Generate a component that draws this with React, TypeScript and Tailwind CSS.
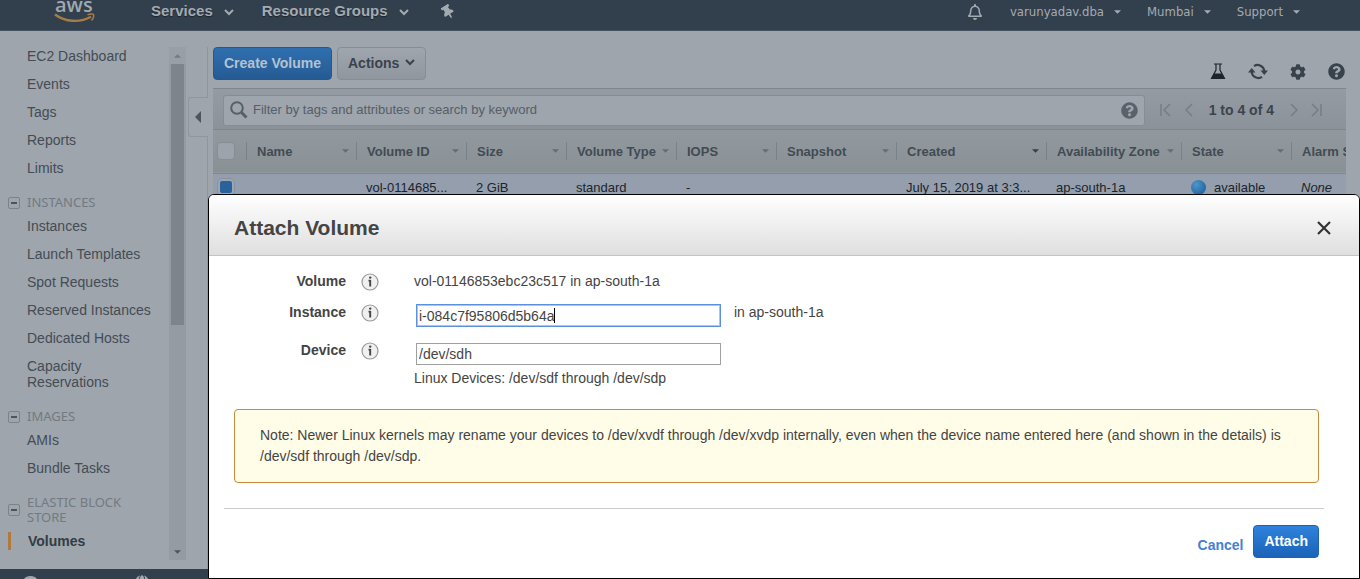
import React from 'react'
import { FaQuestionCircle, FaThumbtack, FaCog, FaRegBell, FaComment, FaGlobe } from 'react-icons/fa'

type NavSection = { title?: string; items: string[] }

const sections: NavSection[] = [
  { items: ['EC2 Dashboard', 'Events', 'Tags', 'Reports', 'Limits'] },
  {
    title: 'INSTANCES',
    items: [
      'Instances',
      'Launch Templates',
      'Spot Requests',
      'Reserved Instances',
      'Dedicated Hosts',
      'Capacity Reservations',
    ],
  },
  { title: 'IMAGES', items: ['AMIs', 'Bundle Tasks'] },
  { title: 'ELASTIC BLOCK STORE', items: ['Volumes'] },
]

const columns = [
  { label: 'Name', width: 'w-[110px]', value: '' },
  { label: 'Volume ID', width: 'w-[110px]', value: 'vol-0114685...' },
  { label: 'Size', width: 'w-[100px]', value: '2 GiB' },
  { label: 'Volume Type', width: 'w-[110px]', value: 'standard' },
  { label: 'IOPS', width: 'w-[100px]', value: '-' },
  { label: 'Snapshot', width: 'w-[120px]', value: '' },
  { label: 'Created', width: 'w-[150px]', value: 'July 15, 2019 at 3:3...', sorted: true },
  { label: 'Availability Zone', width: 'w-[135px]', value: 'ap-south-1a' },
  { label: 'State', width: 'w-[110px]', value: 'available' },
]

const Chevron = ({ className }: { className?: string }) => (
  <svg viewBox="0 0 10 7" className={className} fill="none" stroke="currentColor" strokeWidth="2" aria-hidden="true">
    <path d="M1 1l4 4 4-4" />
  </svg>
)

const Caret = ({ className }: { className?: string }) => (
  <svg viewBox="0 0 8 4" className={className} fill="currentColor" aria-hidden="true">
    <path d="M0 0h8L4 4z" />
  </svg>
)

const AwsLogo = () => (
  <svg viewBox="0 0 44 31" className="h-[31px] w-11" role="img" aria-label="aws">
    <text x="2" y="12" fontFamily="Open Sans, sans-serif" fontWeight="600" fontSize="20" fill="#a0a8b0">
      aws
    </text>
    <path d="M2 14.500c10 7.600 25 8.400 36 2.300" fill="none" stroke="#a97c46" strokeWidth="2.400" />
    <path d="M34.500 14.800c2.500-1 5-1 6-.4.500 1.500-.3 4-2 6" fill="none" stroke="#a97c46" strokeWidth="1.500" />
  </svg>
)

const TopNav = () => (
  <header className="flex h-[31px] shrink-0 border-b border-[#46525f] bg-[#323f4c] text-[#a3abb2]">
    <a href="#" className="ml-[53px]">
      <AwsLogo />
    </a>
    <nav className="ml-[54px] flex h-[23px] items-center text-[15px] font-bold [text-shadow:0_1px_1px_#1c242c]">
      <a href="#" className="flex items-center gap-[11px]">
        Services
        <Chevron className="mt-0.5 h-[7px] w-[10px]" />
      </a>
      <a href="#" className="ml-[28px] flex items-center gap-[11px]">
        Resource Groups
        <Chevron className="mt-0.5 h-[7px] w-[10px]" />
      </a>
      <button type="button" aria-label="Pin" className="ml-8">
        <FaThumbtack className="size-[14px] -rotate-[32deg]" />
      </button>
    </nav>
    <nav className="mr-[60px] ml-auto flex h-[23px] items-center font-['DejaVu_Sans_Condensed','Noto_Sans',sans-serif] text-[13px]">
      <button type="button" aria-label="Notifications" className="mr-[27px]">
        <FaRegBell className="size-4" />
      </button>
      <a href="#" className="mr-[26px] flex items-center gap-[10px]">
        varunyadav.dba <Caret className="mt-px h-1 w-[7px]" />
      </a>
      <a href="#" className="mr-[26px] flex items-center gap-[10px]">
        Mumbai <Caret className="mt-px h-1 w-[7px]" />
      </a>
      <a href="#" className="flex items-center gap-[10px]">
        Support <Caret className="mt-px h-1 w-[7px]" />
      </a>
    </nav>
  </header>
)

const Sidebar = () => (
  <aside className="flex w-[208px] shrink-0">
    <nav className="w-[169px] pt-[11px] text-sm text-[#444c55]">
      {sections.map((section, i) => (
        <div key={i}>
          {section.title && (
            <div className="flex items-center pt-[13px] pb-[2px] pl-2">
              <button
                type="button"
                aria-label={`Collapse ${section.title}`}
                className="flex size-3 shrink-0 items-center justify-center rounded-[2px] border border-[#7b838b]"
              >
                <span className="h-0.5 w-1.5 bg-[#4c545d]" />
              </button>
              <h2 className="ml-[7px] w-[120px] font-['Noto_Sans',sans-serif] text-[13px] leading-[15px] text-[#727a83]">
                {section.title}
              </h2>
            </div>
          )}
          {section.items.map((item) =>
            item === 'Volumes' ? (
              <a key={item} href="#" className="flex h-7 items-center pl-2 font-bold text-[#333c45]">
                <span className="mr-[17px] h-[18px] w-[3px] bg-[#b07a3e]" />
                {item}
              </a>
            ) : (
              <a key={item} href="#" className="block py-[6px] pl-[27px] leading-4">
                <span className={item.length > 18 ? 'block w-[90px]' : 'whitespace-nowrap'}>{item}</span>
              </a>
            ),
          )}
        </div>
      ))}
    </nav>
    <div className="mt-4 mb-[9px] flex w-[17px] flex-col items-center bg-[#949ba2] text-[#4c545d]">
      <div className="flex h-[17px] w-full shrink-0 items-center justify-center bg-[#989fa6] text-[#727a83]">
        <Caret className="h-1 w-[7px] rotate-180" />
      </div>
      <div className="h-[261px] w-[13px] bg-[#7d848b]" />
      <div className="mt-auto flex h-[17px] w-full items-center justify-center">
        <Caret className="h-1 w-[7px]" />
      </div>
    </div>
    <div className="mt-4 flex flex-1 flex-col items-end">
      <div className="h-[50px] w-px bg-[#8f979e]" />
      <button
        type="button"
        aria-label="Hide navigation"
        className="flex h-10 w-5 shrink-0 items-center justify-center rounded-l-[3px] border border-r-0 border-[#8f979e] pr-0.5"
      >
        <svg viewBox="0 0 6 12" className="h-3 w-1.5" fill="#4c545d">
          <path d="M6 0v12L0 6z" />
        </svg>
      </button>
      <div className="w-px flex-1 bg-[#8f979e]" />
    </div>
  </aside>
)

const Pager = () => (
  <div className="ml-[15px] flex items-center text-[#757d85]">
    <button type="button" aria-label="First page">
      <svg viewBox="0 0 11 14" className="h-[14px] w-[11px]" fill="none" stroke="currentColor" strokeWidth="1.500">
        <path d="M1 1v12M10 1L4 7l6 6" />
      </svg>
    </button>
    <button type="button" aria-label="Previous page" className="ml-[14px]">
      <svg viewBox="0 0 8 14" className="h-[14px] w-2" fill="none" stroke="currentColor" strokeWidth="1.500">
        <path d="M7 1L1 7l6 6" />
      </svg>
    </button>
    <span className="mx-4 text-sm font-bold whitespace-nowrap text-[#3b444d]">1 to 4 of 4</span>
    <button type="button" aria-label="Next page">
      <svg viewBox="0 0 8 14" className="h-[14px] w-2" fill="none" stroke="currentColor" strokeWidth="1.500">
        <path d="M1 1l6 6-6 6" />
      </svg>
    </button>
    <button type="button" aria-label="Last page" className="mr-6 ml-[13px]">
      <svg viewBox="0 0 11 14" className="h-[14px] w-[11px]" fill="none" stroke="currentColor" strokeWidth="1.500">
        <path d="M10 1v12M1 1l6 6-6 6" />
      </svg>
    </button>
  </div>
)

const VolumeTable = () => (
  <table className="w-full table-fixed border-collapse text-left">
    <thead>
      <tr className="h-[43px] border-b border-[#7f868d] bg-linear-to-b from-[#91999f] to-[#8a9195] text-[13px] text-[#424b53]">
        <th className="w-[33px] p-0 pl-1">
          <input
            type="checkbox"
            aria-label="Select all volumes"
            className="block size-[18px] appearance-none rounded-[4px] border border-[#868e95] bg-[#9ca3aa]"
          />
        </th>
        {columns.map((col) => (
          <th key={col.label} className={`${col.width} p-0`}>
            <div className="flex h-[18px] items-center justify-between border-l border-[#79818a] pr-[7px] pl-[10px] whitespace-nowrap">
              {col.label}
              <Caret className={col.sorted ? 'h-1 w-[7px] text-[#363f48]' : 'h-1 w-[7px] text-[#646c75]'} />
            </div>
          </th>
        ))}
        <th className="overflow-hidden p-0">
          <div className="flex h-[18px] items-center overflow-hidden border-l border-[#79818a] pl-[10px] whitespace-nowrap">
            Alarm Status
          </div>
        </th>
      </tr>
    </thead>
    <tbody>
      <tr className="h-[28px] bg-[#949eac] text-[13px] text-[#1c242d]">
        <td className="p-0 pl-1">
          <input
            type="checkbox"
            defaultChecked
            aria-label="Select vol-01146853ebc23c517"
            className="block size-[18px] appearance-none rounded-[5px] border-[3px] border-[#9ca6b2] bg-[#9ca3aa] outline outline-[#8791a0] -outline-offset-1 checked:bg-[#2a629c]"
          />
        </td>
        {columns.map((col) => (
          <td key={col.label} className="p-0 pl-[10px] whitespace-nowrap">
            {col.label === 'State' ? (
              <span className="flex items-center gap-2">
                <span className="size-[15px] rounded-full bg-radial-[at_35%_30%] from-[#4f94c9] to-[#125a98]" />
                {col.value}
              </span>
            ) : (
              col.value
            )}
          </td>
        ))}
        <td className="p-0 pl-[10px] italic">None</td>
      </tr>
    </tbody>
  </table>
)

const VolumesPanel = () => (
  <main className="mr-[14px] ml-[5px] min-w-0 flex-1 pt-4">
    <div className="mb-2 flex items-end">
      <button
        type="button"
        className="h-[33px] rounded-[4px] border border-[#235892] bg-linear-to-b from-[#2f6faf] to-[#255b94] px-[10px] pb-[2px] text-sm font-bold text-[#b3c2d2]"
      >
        Create Volume
      </button>
      <button
        type="button"
        className="ml-[5px] flex h-[33px] items-center gap-[6px] rounded-[4px] border border-[#868e95] bg-linear-to-b from-[#9fa6ad] to-[#8f969d] px-[10px] pb-[2px] text-sm font-bold text-[#3a434c]"
      >
        Actions
        <Chevron className="h-[7px] w-[10px]" />
      </button>
      <div className="mr-px ml-auto flex items-center gap-[22px] text-[#39424b]">
        <button type="button" aria-label="Experimental features">
          <svg viewBox="0 0 16 17" className="h-[17px] w-4" fill="none" stroke="#1c252e">
            <path d="M4 1h8M6 1v6L1.500 15.500h13L10 7V1" strokeWidth="1.200" />
            <path d="M4 10.500h8l3 5.500H1z" fill="#1c252e" stroke="none" />
          </svg>
        </button>
        <button type="button" aria-label="Refresh">
          <svg viewBox="0 0 20 17" className="h-[17px] w-5" fill="none" stroke="currentColor" strokeWidth="2.200">
            <path d="M6 3.200A6.600 6.600 0 0 1 16.300 8" />
            <path d="M14 13.800A6.600 6.600 0 0 1 3.700 9" />
            <path d="M12.500 7.500H20L16.300 12zM0 9.500h7.500L3.700 5z" fill="currentColor" stroke="none" />
          </svg>
        </button>
        <button type="button" aria-label="Preferences">
          <FaCog className="size-4" />
        </button>
        <button type="button" aria-label="Help">
          <FaQuestionCircle className="size-[17px]" />
        </button>
      </div>
    </div>
    <div className="flex h-[42px] items-center border-y border-[#7f868d] bg-linear-to-b from-[#949ba2] to-[#8b9299] pt-0.5 pl-[10px]">
      <div className="flex h-[31px] min-w-0 flex-1 items-center rounded-[3px] border border-[#868d94] bg-[#9ea5ac] px-[6px]">
        <svg viewBox="0 0 18 18" className="size-[18px] shrink-0" fill="none" stroke="#565e67">
          <circle cx="7" cy="7" r="5.800" strokeWidth="2" />
          <path d="M11.500 11.500L16.500 16.500" strokeWidth="3" />
        </svg>
        <input
          type="text"
          aria-label="Filter volumes"
          placeholder="Filter by tags and attributes or search by keyword"
          className="ml-[5px] min-w-0 flex-1 bg-transparent text-[13px] outline-none placeholder:text-[#565e67]"
        />
        <button type="button" aria-label="Search help">
          <FaQuestionCircle className="size-[17px] text-[#59616a]" />
        </button>
      </div>
      <Pager />
    </div>
    <VolumeTable />
  </main>
)

const InfoIcon = () => (
  <button type="button" aria-label="More information" className="mt-[2px] mr-[35px] ml-[15px] size-[18px] shrink-0">
    <svg viewBox="0 0 18 18" className="size-[18px]">
      <circle cx="9" cy="9" r="8" fill="#f0f0f0" stroke="#999" strokeWidth="1.200" />
      <path d="M9.200 7v6.500M7.500 7.600h2" fill="none" stroke="#444" strokeWidth="1.900" />
      <circle cx="9.200" cy="4.600" r="1.200" fill="#444" />
    </svg>
  </button>
)

const AttachVolumeDialog = () => (
  <section
    role="dialog"
    aria-labelledby="attach-title"
    className="absolute top-[194px] right-0 bottom-0 left-[208px] rounded-t-[6px] border border-black bg-white text-sm text-[#444]"
  >
    <header className="flex h-[61px] items-center justify-between rounded-t-[5px] border-b border-[#c4c4c4] bg-linear-to-b from-white to-[#dfdfdf] pt-[5px] pr-7 pl-[25px]">
      <h1 id="attach-title" className="text-[21px] font-bold">
        Attach Volume
      </h1>
      <button type="button" aria-label="Close">
        <svg viewBox="0 0 14 14" className="size-[14px]" fill="none" stroke="#333" strokeWidth="2.200">
          <path d="M1 1l12 12M13 1L1 13" />
        </svg>
      </button>
    </header>
    <form className="pt-[15px] leading-5">
      <div className="flex h-[31px] items-start">
        <span className="w-[137px] text-right font-bold">Volume</span>
        <InfoIcon />
        <span>vol-01146853ebc23c517 in ap-south-1a</span>
      </div>
      <div className="flex h-[38px] items-start">
        <label htmlFor="instance" className="w-[137px] text-right font-bold">
          Instance
        </label>
        <InfoIcon />
        <div className="relative mt-[2px] ml-[2px]">
          <input
            id="instance"
            type="text"
            defaultValue="i-084c7f95806d5b64a"
            className="block h-[23px] w-[305px] border border-[#5b8fe0] bg-white px-[2px] ring-1 ring-[#a9c6f2] outline-none ring-inset"
          />
          <span className="absolute top-1 left-[138px] h-[15px] w-px bg-black" />
        </div>
        <span className="ml-[13px]">in ap-south-1a</span>
      </div>
      <div className="flex items-start">
        <label htmlFor="device" className="w-[137px] text-right font-bold">
          Device
        </label>
        <InfoIcon />
        <div className="pt-[3px]">
          <input
            id="device"
            type="text"
            defaultValue="/dev/sdh"
            className="ml-[2px] block h-[22px] w-[305px] border border-[#a0a0a0] bg-white px-[2px] outline-none"
          />
          <p className="mt-[3px]">Linux Devices: /dev/sdf through /dev/sdp</p>
        </div>
      </div>
      <p className="mt-[21px] mr-10 ml-[25px] rounded-[4px] border border-[#c8893a] bg-[#fffde8] px-[25px] py-[15px] leading-[21px]">
        Note: Newer Linux kernels may rename your devices to /dev/xvdf through /dev/xvdp internally, even when the
        device name entered here (and shown in the details) is /dev/sdf through /dev/sdp.
      </p>
      <footer className="mt-[25px] mr-[35px] ml-[15px] flex items-center justify-end gap-[10px] border-t border-[#ccc] pt-4 pr-[5px] font-bold">
        <a href="#" className="pt-[6px] text-[#4480d6]">
          Cancel
        </a>
        <button
          type="submit"
          className="h-[33px] rounded-[4px] border border-[#1f62b0] bg-linear-to-b from-[#2f82dc] to-[#1a63b8] px-[10px] pb-[2px] font-bold text-white"
        >
          Attach
        </button>
      </footer>
    </form>
  </section>
)

export default function App() {
  return (
    <div className="relative flex h-screen flex-col overflow-hidden bg-[#9ea5ac] font-['Liberation_Sans',Arial,sans-serif]">
      <TopNav />
      <div className="flex min-h-0 flex-1">
        <Sidebar />
        <VolumesPanel />
      </div>
      <footer className="flex h-[10px] shrink-0 overflow-hidden bg-[#323f4c] pt-1.5 pl-[23px] text-[#a0a8b0]">
        <FaComment className="size-[15px] shrink-0" />
        <FaGlobe className="ml-[97px] size-[14px] shrink-0" />
      </footer>
      <AttachVolumeDialog />
    </div>
  )
}
